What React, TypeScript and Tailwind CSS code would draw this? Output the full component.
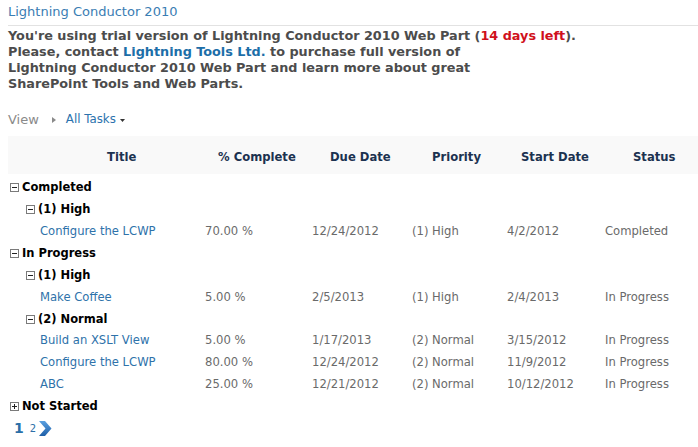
import React from "react";

type Row = { title: string; pct: string; due: string; priority: string; start: string; status: string };
type Item =
  | { kind: "group"; level: 1 | 2; label: string; open: boolean }
  | { kind: "row"; row: Row };

const ITEMS: Item[] = [
  { kind: "group", level: 1, label: "Completed", open: true },
  { kind: "group", level: 2, label: "(1) High", open: true },
  { kind: "row", row: { title: "Configure the LCWP", pct: "70.00 %", due: "12/24/2012", priority: "(1) High", start: "4/2/2012", status: "Completed" } },
  { kind: "group", level: 1, label: "In Progress", open: true },
  { kind: "group", level: 2, label: "(1) High", open: true },
  { kind: "row", row: { title: "Make Coffee", pct: "5.00 %", due: "2/5/2013", priority: "(1) High", start: "2/4/2013", status: "In Progress" } },
  { kind: "group", level: 2, label: "(2) Normal", open: true },
  { kind: "row", row: { title: "Build an XSLT View", pct: "5.00 %", due: "1/17/2013", priority: "(2) Normal", start: "3/15/2012", status: "In Progress" } },
  { kind: "row", row: { title: "Configure the LCWP", pct: "80.00 %", due: "12/24/2012", priority: "(2) Normal", start: "11/9/2012", status: "In Progress" } },
  { kind: "row", row: { title: "ABC", pct: "25.00 %", due: "12/21/2012", priority: "(2) Normal", start: "10/12/2012", status: "In Progress" } },
  { kind: "group", level: 1, label: "Not Started", open: false },
];

const COLS = "grid grid-cols-[32px_165px_107px_100px_95px_98px_1fr]";

function Toggle({ open }: { open: boolean }) {
  return (
    <svg width="9" height="9" viewBox="0 0 9 9" className="shrink-0">
      <rect x="0.5" y="0.5" width="8" height="8" fill="#fff" stroke="#7a7a7a" />
      <line x1="2" y1="4.5" x2="7" y2="4.5" stroke="#222" />
      {!open && <line x1="4.5" y1="2" x2="4.5" y2="7" stroke="#222" />}
    </svg>
  );
}

export default function App() {
  return (
    <div className="w-[698px] h-[447px] overflow-hidden bg-white font-['DejaVu_Sans',Verdana,sans-serif]">
      <div className="pl-2 pt-[3px]">
        <div className="text-[13px] leading-[18px] text-[#3a7db3]">Lightning Conductor 2010</div>
        <div className="mt-[4px] border-t border-[#e2e2e2]" />
        <div className="mt-[2px] text-[12.8px] leading-[16px] font-bold text-[#4c4c4c]">
          <div>
            You're using trial version of Lightning Conductor 2010 Web Part (
            <span className="text-[#d0101b]">14 days left</span>).
          </div>
          <div>
            Please, contact <span className="text-[#1c6ea8]">Lightning Tools Ltd.</span> to purchase full version of
          </div>
          <div>Lightning Conductor 2010 Web Part and learn more about great</div>
          <div>SharePoint Tools and Web Parts.</div>
        </div>

        <div className="mt-[19px] flex items-center h-[18px]">
          <span className="text-[13px] text-[#8a8a8a]">View</span>
          <svg width="4" height="6" viewBox="0 0 4 6" className="ml-[13px]">
            <polygon points="0,0 4,3 0,6" fill="#8a8a8a" />
          </svg>
          <span className="ml-[10px] text-[11.8px] text-[#2b72ad]">All Tasks</span>
          <svg width="5" height="3" viewBox="0 0 5 3" className="ml-[4px]">
            <polygon points="0,0 5,0 2.5,3" fill="#333" />
          </svg>
        </div>

        <div className={`${COLS} mt-[7px] h-[38px] items-center pt-[5px] bg-[#f9f9f9] text-[11.6px] font-bold text-[#1c3250]`}>
          <div />
          <div className="pl-[67px]">Title</div>
          <div className="pl-[13px]">% Complete</div>
          <div className="pl-[18px]">Due Date</div>
          <div className="pl-[20px]">Priority</div>
          <div className="pl-[14px]">Start Date</div>
          <div className="pl-[28px]">Status</div>
        </div>

        <div className="mt-[3px]">
          {ITEMS.map((it, i) =>
            it.kind === "group" ? (
              <div
                key={i}
                className={`flex h-[21.9px] items-center gap-[3px] text-[11.5px] font-bold text-black ${
                  it.level === 1 ? "pl-[2px]" : "pl-[18px]"
                }`}
              >
                <Toggle open={it.open} />
                <span>{it.label}</span>
              </div>
            ) : (
              <div key={i} className={`${COLS} h-[21.9px] items-center text-[11.6px] text-[#6a6a6a]`}>
                <div />
                <div className="text-[#2e72aa]">{it.row.title}</div>
                <div>{it.row.pct}</div>
                <div>{it.row.due}</div>
                <div>{it.row.priority}</div>
                <div>{it.row.start}</div>
                <div>{it.row.status}</div>
              </div>
            )
          )}
          <div className="flex h-[21px] items-center pl-[6px]">
            <span className="text-[14px] font-bold text-[#2b6fa8]">1</span>
            <span className="ml-[6px] text-[10px] text-[#2b6fa8]">2</span>
            <svg width="13" height="15" viewBox="0 0 13 15" className="ml-[3px]">
              <defs>
                <linearGradient id="chev" x1="0" y1="0" x2="0" y2="1">
                  <stop offset="0" stopColor="#5aa0e0" />
                  <stop offset="1" stopColor="#1e5fa8" />
                </linearGradient>
              </defs>
              <polygon points="0,0 6,0 12.5,7.5 6,15 0,15 6.5,7.5" fill="url(#chev)" />
            </svg>
          </div>
        </div>
      </div>
    </div>
  );
}
